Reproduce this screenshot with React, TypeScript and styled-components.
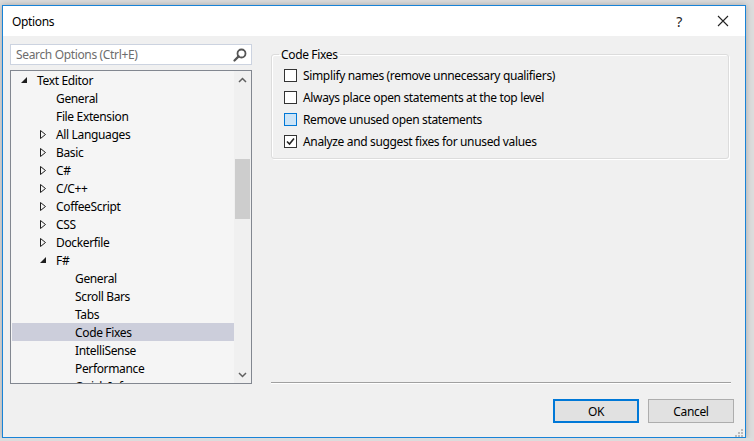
import React from 'react';
import styled, { createGlobalStyle } from 'styled-components';

const GlobalStyle = createGlobalStyle`
  html, body {
    margin: 0;
    padding: 0;
    background: #dcdcdc;
    font-family: 'Segoe UI', 'Noto Sans', sans-serif;
    font-size: 12px;
    letter-spacing: -0.35px;
    color: #000;
  }
`;

const Window = styled.div`
  margin: 5px 0 0 2px;
  width: 744px;
  height: 433px;
  box-sizing: border-box;
  border: 1px solid #1883d7;
  background: #f0f0f0;
  display: flex;
  flex-direction: column;
  box-shadow: 0 0 6px rgba(0, 0, 0, 0.25);
`;

const TitleBar = styled.div`
  height: 30px;
  background: #fff;
  display: flex;
  align-items: center;
  padding-left: 9px;
`;

const Title = styled.span`
  flex: 1;
  font-size: 12px;
`;

const TitleButton = styled.span`
  width: 44px;
  display: flex;
  justify-content: center;
  font-size: 14px;
  color: #222;
`;

const Body = styled.div`
  flex: 1;
  display: flex;
  padding: 8px 0 0 7px;
  gap: 18px;
`;

const LeftColumn = styled.div`
  width: 242px;
  display: flex;
  flex-direction: column;
  gap: 5px;
`;

const SearchBox = styled.div`
  height: 21px;
  box-sizing: border-box;
  border: 1px solid #ccd3e0;
  background: #fff;
  display: flex;
  align-items: center;
  padding: 0 4px 0 5px;
  color: #6d6d6d;
`;

const SearchText = styled.span`
  flex: 1;
`;

const Tree = styled.div`
  height: 314px;
  box-sizing: border-box;
  border: 1px solid #828790;
  background: #f5f5f5;
  display: flex;
  overflow: hidden;
`;

const TreeList = styled.div`
  flex: 1;
  padding: 0 0 0 1px;
  overflow: hidden;
`;

const TreeRow = styled.div<{ $level: number; $selected?: boolean }>`
  height: 18px;
  display: flex;
  align-items: center;
  padding-left: ${(p) => 6 + p.$level * 19}px;
  background: ${(p) => (p.$selected ? '#cccedb' : 'transparent')};
  white-space: nowrap;
`;

const Expander = styled.span`
  width: 19px;
  height: 18px;
  display: flex;
  align-items: center;
  padding-left: 3px;
  box-sizing: border-box;
`;

const ScrollBar = styled.div`
  width: 17px;
  background: #f0f0f0;
  display: flex;
  flex-direction: column;
  align-items: center;
`;

const ScrollArrow = styled.div`
  height: 17px;
  display: flex;
  align-items: center;
  justify-content: center;
`;

const ScrollTrack = styled.div`
  flex: 1;
  width: 100%;
  padding-top: 71px;
  box-sizing: border-box;
`;

const ScrollThumb = styled.div`
  width: 15px;
  margin-left: 1px;
  height: 60px;
  background: #cdcdcd;
`;

const RightColumn = styled.div`
  width: 460px;
  display: flex;
  flex-direction: column;
  padding-left: 1px;
`;

const GroupBox = styled.fieldset`
  margin: 2px 0 0 0;
  width: 458px;
  height: 113px;
  box-sizing: border-box;
  border: 1px solid #dcdcdc;
  border-radius: 3px;
  box-shadow: inset 1px 1px 0 #fff, 1px 1px 0 #fff;
  padding: 1px 0 0 12px;
`;

const Legend = styled.legend`
  padding: 0 2px;
  margin-left: -5px;
  font-size: 12px;
`;

const OptionRow = styled.label`
  height: 22px;
  display: flex;
  align-items: center;
  gap: 6px;
`;

const Box = styled.span<{ $hover?: boolean }>`
  width: 13px;
  height: 13px;
  box-sizing: border-box;
  border: 1px solid ${(p) => (p.$hover ? '#0078d7' : '#333')};
  background: ${(p) => (p.$hover ? '#cce4f7' : '#fff')};
  display: flex;
  align-items: center;
  justify-content: center;
`;

const Spacer = styled.div`
  flex: 1;
`;

const Separator = styled.div`
  height: 1px;
  background: #a0a0a0;
  border-bottom: 1px solid #fff;
  width: 460px;
`;

const Footer = styled.div`
  height: 54px;
  display: flex;
  justify-content: flex-end;
  align-items: flex-start;
  padding: 15px 11px 0 0;
  box-sizing: border-box;
  gap: 9px;
`;

const Button = styled.button<{ $default?: boolean }>`
  width: 86px;
  height: 24px;
  box-sizing: border-box;
  background: #e1e1e1;
  border: ${(p) => (p.$default ? '2px solid #0078d7' : '1px solid #adadad')};
  font-family: inherit;
  font-size: 12px;
  letter-spacing: inherit;
  color: #000;
  padding: 0;
`;

const GripRow = styled.div`
  display: flex;
  justify-content: flex-end;
  padding-right: 2px;
  margin-top: -9px;
`;

type Node = { label: string; level: number; expander?: 'open' | 'closed'; selected?: boolean };

const nodes: Node[] = [
  { label: 'Text Editor', level: 0, expander: 'open' },
  { label: 'General', level: 1 },
  { label: 'File Extension', level: 1 },
  { label: 'All Languages', level: 1, expander: 'closed' },
  { label: 'Basic', level: 1, expander: 'closed' },
  { label: 'C#', level: 1, expander: 'closed' },
  { label: 'C/C++', level: 1, expander: 'closed' },
  { label: 'CoffeeScript', level: 1, expander: 'closed' },
  { label: 'CSS', level: 1, expander: 'closed' },
  { label: 'Dockerfile', level: 1, expander: 'closed' },
  { label: 'F#', level: 1, expander: 'open' },
  { label: 'General', level: 2 },
  { label: 'Scroll Bars', level: 2 },
  { label: 'Tabs', level: 2 },
  { label: 'Code Fixes', level: 2, selected: true },
  { label: 'IntelliSense', level: 2 },
  { label: 'Performance', level: 2 },
  { label: 'Quick Info', level: 2 },
];

const options = [
  { label: 'Simplify names (remove unnecessary qualifiers)' },
  { label: 'Always place open statements at the top level' },
  { label: 'Remove unused open statements', hover: true },
  { label: 'Analyze and suggest fixes for unused values', checked: true },
];

const OpenGlyph = () => (
  <svg width="7" height="7" viewBox="0 0 7 7">
    <polygon points="6,0 6,6 0,6" fill="#1e1e1e" />
  </svg>
);

const ClosedGlyph = () => (
  <svg width="6" height="9" viewBox="0 0 6 9">
    <polygon points="0.5,0.5 5.5,4.5 0.5,8.5" fill="none" stroke="#1e1e1e" strokeWidth="1" />
  </svg>
);

const App: React.FC = () => {
  return (
    <>
      <GlobalStyle />
      <Window>
        <TitleBar>
          <Title>Options</Title>
          <TitleButton>?</TitleButton>
          <TitleButton>
            <svg width="12" height="12" viewBox="0 0 12 12">
              <path d="M1 1 L11 11 M11 1 L1 11" stroke="#222" strokeWidth="1.1" />
            </svg>
          </TitleButton>
        </TitleBar>
        <Body>
          <LeftColumn>
            <SearchBox>
              <SearchText>Search Options (Ctrl+E)</SearchText>
              <svg width="14" height="14" viewBox="0 0 14 14">
                <circle cx="8.5" cy="5.5" r="4" fill="none" stroke="#555" strokeWidth="1.8" />
                <path d="M5.6 8.4 L1.5 12.5" stroke="#555" strokeWidth="2.2" strokeLinecap="round" />
              </svg>
            </SearchBox>
            <Tree>
              <TreeList>
                {nodes.map((n, i) => (
                  <TreeRow key={i} $level={n.level} $selected={n.selected}>
                    <Expander>
                      {n.expander === 'open' && <OpenGlyph />}
                      {n.expander === 'closed' && <ClosedGlyph />}
                    </Expander>
                    {n.label}
                  </TreeRow>
                ))}
              </TreeList>
              <ScrollBar>
                <ScrollArrow>
                  <svg width="9" height="6" viewBox="0 0 9 6">
                    <path d="M1 5 L4.5 1.5 L8 5" fill="none" stroke="#606060" strokeWidth="1.5" />
                  </svg>
                </ScrollArrow>
                <ScrollTrack>
                  <ScrollThumb />
                </ScrollTrack>
                <ScrollArrow>
                  <svg width="9" height="6" viewBox="0 0 9 6">
                    <path d="M1 1 L4.5 4.5 L8 1" fill="none" stroke="#606060" strokeWidth="1.5" />
                  </svg>
                </ScrollArrow>
              </ScrollBar>
            </Tree>
          </LeftColumn>
          <RightColumn>
            <GroupBox>
              <Legend>Code Fixes</Legend>
              {options.map((o) => (
                <OptionRow key={o.label}>
                  <Box $hover={o.hover}>
                    {o.checked && (
                      <svg width="9" height="9" viewBox="0 0 9 9">
                        <path d="M1 4.5 L3.5 7 L8 1.5" fill="none" stroke="#222" strokeWidth="1.6" />
                      </svg>
                    )}
                  </Box>
                  {o.label}
                </OptionRow>
              ))}
            </GroupBox>
            <Spacer />
            <Separator />
          </RightColumn>
        </Body>
        <Footer>
          <Button $default>OK</Button>
          <Button>Cancel</Button>
        </Footer>
        <GripRow>
          <svg width="8" height="8" viewBox="0 0 8 8">
            <rect x="6" y="0" width="2" height="2" fill="#bbb" />
            <rect x="3" y="3" width="2" height="2" fill="#bbb" />
            <rect x="6" y="3" width="2" height="2" fill="#bbb" />
            <rect x="0" y="6" width="2" height="2" fill="#bbb" />
            <rect x="3" y="6" width="2" height="2" fill="#bbb" />
            <rect x="6" y="6" width="2" height="2" fill="#bbb" />
          </svg>
        </GripRow>
      </Window>
    </>
  );
};

export default App;
